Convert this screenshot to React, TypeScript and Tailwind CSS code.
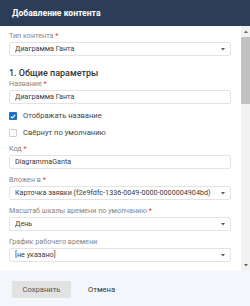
import React from "react";

const font = { fontFamily: "Roboto, 'Noto Sans', sans-serif" };

function Label({ text, req }: { text: string; req?: boolean }) {
  return (
    <div className="h-[10px] text-[7.2px] leading-[10px] text-[#858585] whitespace-nowrap">
      {text}
      {req && <span className="text-[#e53935]"> *</span>}
    </div>
  );
}

function Field({ value, select }: { value: string; select?: boolean }) {
  return (
    <div className="mt-[1px] h-[14px] border border-[#e3e3e3] rounded-[2px] bg-white flex items-center pl-[5px] pr-[5px]">
      <span className="flex-1 text-[7.2px] leading-[10px] text-[#3a3a3a] whitespace-nowrap overflow-hidden">{value}</span>
      {select && (
        <svg width="4" height="3" viewBox="0 0 4 3" className="ml-1 shrink-0">
          <path d="M0 0 L4 0 L2 2.5 Z" fill="#555" />
        </svg>
      )}
    </div>
  );
}

function Check({ checked, text, mt }: { checked?: boolean; text: string; mt: string }) {
  return (
    <div className={`flex items-center h-[8px] ${mt}`}>
      {checked ? (
        <div className="w-[8px] h-[8px] rounded-[1px] bg-[#1f6fc5] flex items-center justify-center">
          <svg width="6" height="5" viewBox="0 0 6 5">
            <path d="M0.7 2.6 L2.3 4 L5.3 0.9" stroke="#fff" strokeWidth="1.1" fill="none" />
          </svg>
        </div>
      ) : (
        <div className="w-[8px] h-[8px] rounded-[1px] border border-[#cfcfcf] bg-white" />
      )}
      <span className="ml-[6px] text-[7.6px] leading-[10px] text-[#444] whitespace-nowrap">{text}</span>
    </div>
  );
}

export default function App() {
  return (
    <div className="w-[250px] h-[306px] flex flex-col bg-white overflow-hidden" style={font}>
      <div className="h-[26px] bg-[#2c3e57] flex items-center px-[12px] shrink-0">
        <span className="text-white font-bold text-[8.6px] leading-[12px]">Добавление контента</span>
      </div>
      <div className="flex flex-1 min-h-0">
        <div className="flex-1 pl-[9px] pr-[10px] pt-[5px] overflow-hidden">
          <Label text="Тип контента" req />
          <Field value="Диаграмма Ганта" select />
          <div className="mt-[11px] h-[12px] text-[9px] leading-[12px] font-medium text-[#333]">1. Общие параметры</div>
          <Label text="Название" req />
          <Field value="Диаграмма Ганта" />
          <Check checked text="Отображать название" mt="mt-[8px]" />
          <Check text="Свёрнут по умолчанию" mt="mt-[9px]" />
          <div className="mt-[7px]">
            <Label text="Код" req />
            <Field value="DiagrammaGanta" />
          </div>
          <div className="mt-[6px]">
            <Label text="Вложен в" req />
            <Field value="Карточка заявки (f2e9fdfc-1336-0049-0000-0000004904bd)" select />
          </div>
          <div className="mt-[6px]">
            <Label text="Масштаб шкалы времени по умолчанию" req />
            <Field value="День" select />
          </div>
          <div className="mt-[6px]">
            <Label text="График рабочего времени" />
            <Field value="[не указано]" select />
          </div>
        </div>
        <div className="w-[9px] bg-[#f1f1f1] flex flex-col items-center shrink-0">
          <div className="h-[11px] flex items-center justify-center">
            <svg width="4" height="3" viewBox="0 0 4 3">
              <path d="M0 3 L4 3 L2 0.5 Z" fill="#666" />
            </svg>
          </div>
          <div className="w-full h-[67px] bg-[#c1c1c1]" />
          <div className="flex-1" />
          <div className="h-[9px] flex items-center justify-center">
            <svg width="4" height="3" viewBox="0 0 4 3">
              <path d="M0 0 L4 0 L2 2.5 Z" fill="#666" />
            </svg>
          </div>
        </div>
      </div>
      <div className="h-[36px] bg-[#f3f6fa] shrink-0 flex items-start pt-[11px] pl-[12px]">
        <div className="w-[59px] h-[17px] bg-[#e2e2e2] rounded-[1px] flex items-center justify-center text-[7.6px] text-[#555]">
          Сохранить
        </div>
        <div className="ml-[17px] h-[17px] flex items-center text-[7.6px] text-[#333]">Отмена</div>
      </div>
    </div>
  );
}
